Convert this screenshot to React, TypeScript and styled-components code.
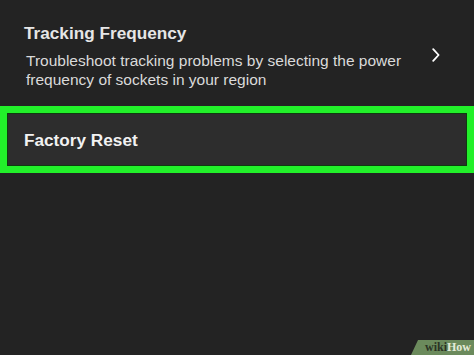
import React from "react";
import styled, { createGlobalStyle } from "styled-components";

const Global = createGlobalStyle`
  html, body { margin: 0; padding: 0; background: #232323; }
  body { font-family: "Liberation Sans", Arial, sans-serif; }
  #root { width: 474px; height: 355px; overflow: hidden; }
`;

const Page = styled.div`
  position: relative;
  width: 474px;
  height: 355px;
  background: #232323;
  display: flex;
  flex-direction: column;
`;

const Item = styled.div`
  display: flex;
  padding: 23px 32px 0 24px;
  height: 84px;
  box-sizing: border-box;
  align-items: flex-start;
`;

const TextCol = styled.div`
  flex: 1;
  display: flex;
  flex-direction: column;
`;

const Title = styled.div`
  color: #e6e6e6;
  font-size: 17.2px;
  font-weight: 700;
  line-height: 21px;
`;

const Sub = styled.div`
  color: #dadada;
  font-size: 15.5px;
  line-height: 19px;
  margin-top: 7px;
  padding-left: 2px;
`;

const Chevron = styled.div`
  width: 10px;
  margin-top: 25px;
  display: flex;
`;

const Highlight = styled.div`
  margin-top: 22px;
  height: 67px;
  box-sizing: border-box;
  border: 7px solid #22f02a;
  display: flex;
`;

const HighlightInner = styled.div`
  flex: 1;
  background: #2d2d2d;
  border: 1px solid #0f3a0f;
  display: flex;
  align-items: center;
  padding-left: 16px;
`;

const ResetLabel = styled.div`
  color: #f2f2f2;
  font-size: 17.2px;
  font-weight: 700;
  margin-top: 1px;
`;

const Badge = styled.div`
  position: absolute;
  right: 0;
  bottom: 0;
  width: 60px;
  height: 15px;
  background: #6b8a5c;
  clip-path: polygon(7px 0, 100% 0, 100% 100%, 0 100%);
  display: flex;
  align-items: center;
  justify-content: flex-end;
  padding-right: 3px;
  font-family: "Liberation Serif", "Times New Roman", serif;
  font-size: 12px;
  font-weight: 700;
  line-height: 15px;
`;

const Wiki = styled.span`
  color: #2a3324;
`;

const How = styled.span`
  color: #e4ead8;
`;

export default function App() {
  return (
    <Page>
      <Global />
      <Item>
        <TextCol>
          <Title>Tracking Frequency</Title>
          <Sub>
            Troubleshoot tracking problems by selecting the power
            <br />
            frequency of sockets in your region
          </Sub>
        </TextCol>
        <Chevron>
          <svg width="8" height="14" viewBox="0 0 8 14">
            <path d="M1.2 1.2 L6.6 7 L1.2 12.8" fill="none" stroke="#ffffff" strokeWidth="1.8" strokeLinecap="round" strokeLinejoin="round" />
          </svg>
        </Chevron>
      </Item>
      <Highlight>
        <HighlightInner>
          <ResetLabel>Factory Reset</ResetLabel>
        </HighlightInner>
      </Highlight>
      <Badge>
        <Wiki>wiki</Wiki>
        <How>How</How>
      </Badge>
    </Page>
  );
}
